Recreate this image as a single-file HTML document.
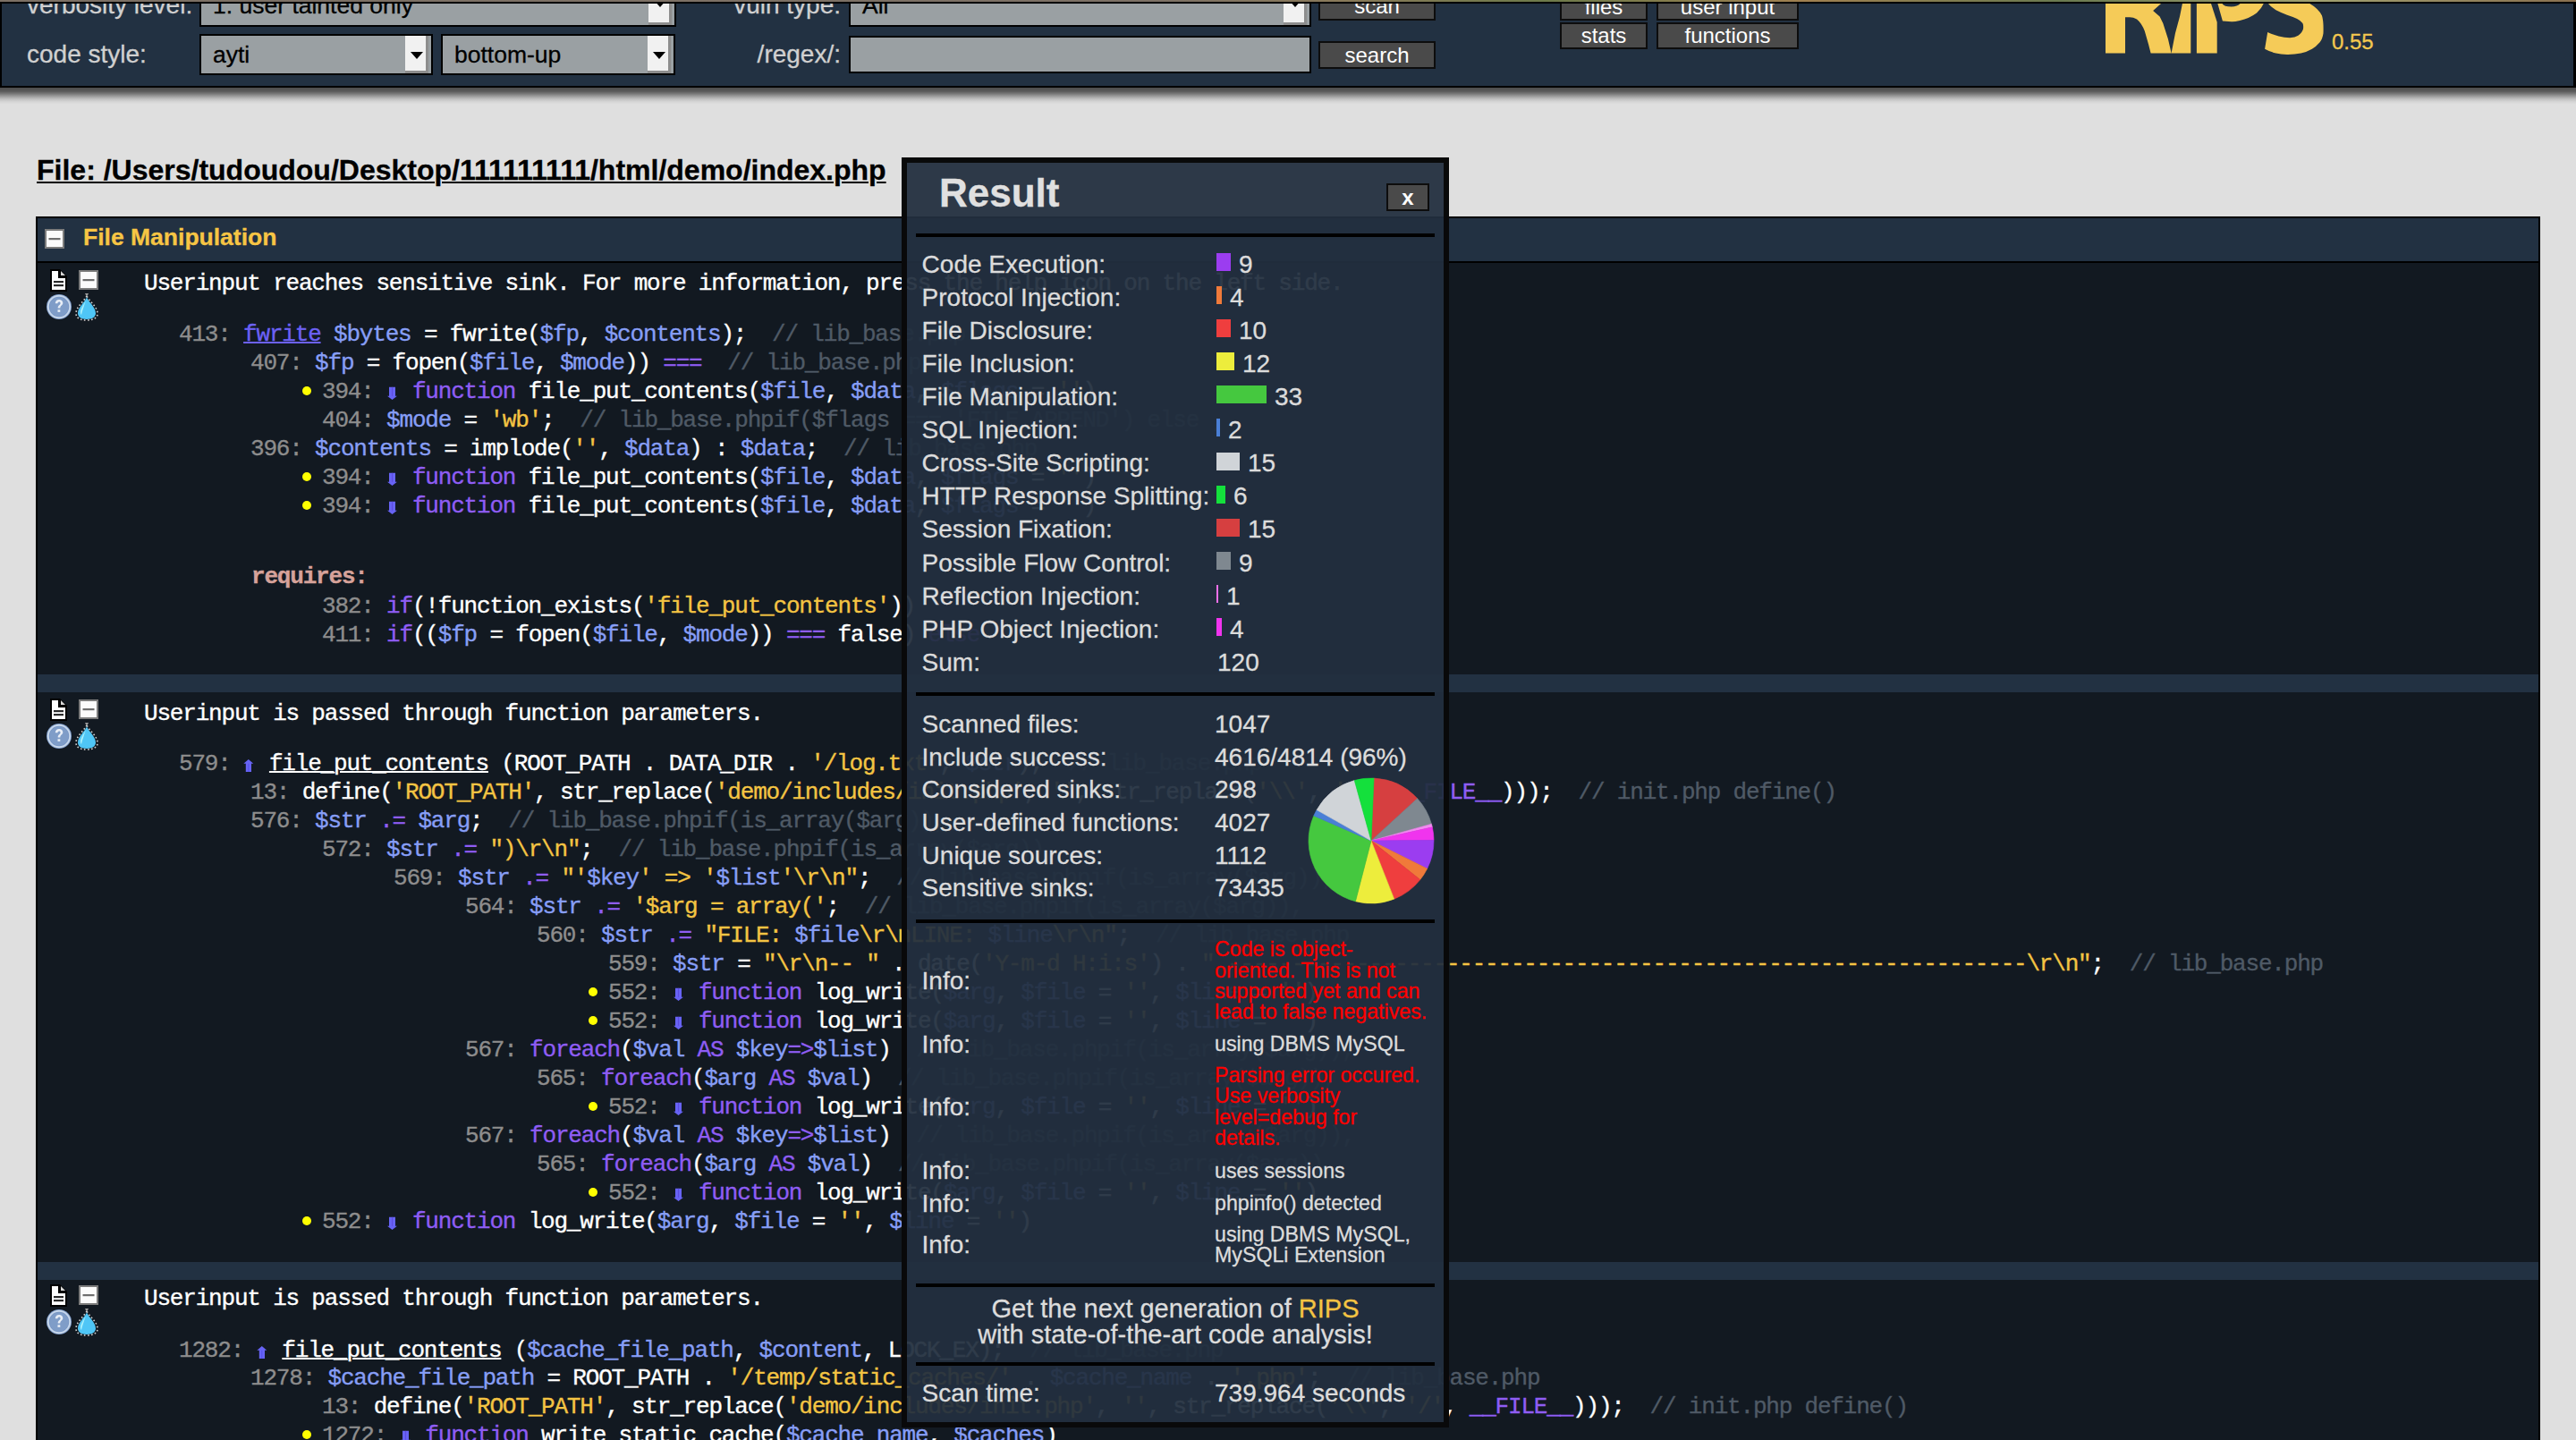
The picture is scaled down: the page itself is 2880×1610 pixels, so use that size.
<!DOCTYPE html>
<html><head><meta charset="utf-8"><title>RIPS</title>
<style>
html,body{margin:0;padding:0;}
body{width:2880px;height:1610px;overflow:hidden;position:relative;background:#dfdfdf;font-family:"Liberation Sans",sans-serif;}
.t{position:absolute;white-space:pre;-webkit-text-stroke:0.3px currentColor;}
.cl{position:absolute;white-space:pre;-webkit-text-stroke:0.35px currentColor;font-family:"Liberation Mono",monospace;font-size:26px;letter-spacing:-1.19px;line-height:32px;color:#fff;}
.cl .n{color:#8d8d8d}
.cl .v{color:#879ef6}
.cl .k{color:#8f5df4}
.cl .s{color:#f4c443}
.cl .c{color:#4f5a66}
.cl .lk{color:#6c61f4;text-decoration:underline;text-underline-offset:1px;text-decoration-thickness:2px}
.cl .u{color:#fff;text-decoration:underline;text-underline-offset:1px;text-decoration-thickness:2px}
.cl .ar{display:inline-block;width:13.22px;margin-right:1.19px;height:20px;vertical-align:-3px;}
.cl .ar svg{display:block}
.bl::before{content:"";position:absolute;left:-22px;top:10px;width:10px;height:10px;border-radius:50%;background:#ffff00;}
.bar{position:absolute;height:20px;}
#strip{position:absolute;left:0;top:0;width:2880px;height:2px;background:linear-gradient(90deg,#7c7065 0%,#7d7166 45%,#8a7a5a 52%,#6d7a4a 60%,#a08050 70%,#6a7a50 80%,#a0a070 90%,#8a7050 100%);}
#hdr{position:absolute;left:0;top:2px;width:2880px;height:96px;box-sizing:border-box;background:#223142;border:2px solid #000;border-right-width:3px;}
#hshadow{position:absolute;left:0;top:98px;width:2880px;height:19px;background:linear-gradient(180deg,rgba(0,0,0,.66) 0px,rgba(0,0,0,.6) 4px,rgba(0,0,0,.45) 7px,rgba(0,0,0,.28) 10px,rgba(0,0,0,.13) 13px,rgba(0,0,0,.04) 16px,rgba(0,0,0,0) 19px);}
#hclip{position:absolute;left:2px;top:4px;width:2875px;height:92px;overflow:hidden;}
#hin{position:absolute;left:-2px;top:-4px;width:2880px;height:100px;}
.sel{position:absolute;box-sizing:border-box;background:#9aa0a3;border:2px solid #000;}
.sel .btn{position:absolute;right:3px;top:0;bottom:0;width:26px;background:#f1f1f1;border-right:3px solid #8d8d8d;border-bottom:3px solid #8d8d8d;box-sizing:border-box;}
.sel .btn::after{content:"";position:absolute;left:6px;top:18px;border-left:7px solid transparent;border-right:7px solid transparent;border-top:8px solid #000;}
.hb{position:absolute;box-sizing:border-box;background:#4a4a4a;border:2px solid #0d0d0d;color:#fff;text-align:center;font-size:24px;}
#ftitle{position:absolute;left:41px;top:172px;font-size:32px;font-weight:bold;color:#000;-webkit-text-stroke:0.3px #000;text-decoration:underline;text-decoration-thickness:2px;text-underline-offset:2px;white-space:pre;}
#box{position:absolute;left:40px;top:242px;width:2800px;height:1400px;background:#121921;border-left:2px solid #000;border-top:2px solid #000;box-sizing:border-box;}
#boxhdr{position:absolute;left:42px;top:244px;width:2796px;height:48px;background:#223142;border-bottom:2px solid #000;}
#boxr{position:absolute;left:2838px;top:242px;width:2px;height:1400px;background:#000;}
.sepband{position:absolute;left:42px;width:2796px;height:20px;background:#223142;}
.ico{position:absolute;}
#dlg{position:absolute;left:1008px;top:176px;width:612px;height:1420px;box-sizing:border-box;border:6px solid rgba(8,8,8,.97);background:rgba(34,47,63,.94);}
.hr{position:absolute;left:1024px;width:580px;height:4px;background:#000;}
</style></head>
<body>
<div id="strip"></div>
<div id="hdr"></div><div id="hshadow"></div>
<div id="hclip"><div id="hin">
<!-- header controls -->
<div class="t" style="left:30px;top:-11px;font-size:28px;line-height:34px;color:#d0d0d0">verbosity level:</div>
<div class="sel" style="left:223px;top:-20px;width:533px;height:50px"><div class="t" style="left:13px;top:8px;font-size:26.5px;line-height:32px;color:#000">1. user tainted only</div><div class="btn"></div></div>
<div class="t" style="left:30px;top:44px;font-size:28px;line-height:34px;color:#d0d0d0">code style:</div>
<div class="sel" style="left:223px;top:38px;width:261px;height:46px"><div class="t" style="left:13px;top:5px;font-size:26.5px;line-height:32px;color:#000">ayti</div><div class="btn"></div></div>
<div class="sel" style="left:493px;top:38px;width:262px;height:46px"><div class="t" style="left:13px;top:5px;font-size:26.5px;line-height:32px;color:#000">bottom-up</div><div class="btn"></div></div>
<div class="t" style="left:820px;top:-11px;font-size:28px;line-height:34px;color:#d0d0d0;width:120px;text-align:right">vuln type:</div>
<div class="sel" style="left:949px;top:-20px;width:517px;height:50px"><div class="t" style="left:13px;top:8px;font-size:26.5px;line-height:32px;color:#000">All</div><div class="btn"></div></div>
<div class="t" style="left:820px;top:44px;font-size:28px;line-height:34px;color:#d0d0d0;width:120px;text-align:right">/regex/:</div>
<div class="sel" style="left:949px;top:40px;width:517px;height:42px"></div>
<div class="hb" style="left:1474px;top:-10px;width:131px;height:33px;line-height:29px">scan</div>
<div class="hb" style="left:1474px;top:46px;width:131px;height:31px;line-height:27px">search</div>
<div class="hb" style="left:1744px;top:-8px;width:98px;height:31px;line-height:27px">files</div>
<div class="hb" style="left:1744px;top:25px;width:98px;height:30px;line-height:26px">stats</div>
<div class="hb" style="left:1852px;top:-8px;width:159px;height:31px;line-height:27px">user input</div>
<div class="hb" style="left:1852px;top:25px;width:159px;height:30px;line-height:26px">functions</div>
<svg class="ico" style="left:2340px;top:0px" width="270" height="64" viewBox="2340 0 270 64"><path fill="#f5cb58" d="M2354 3.7H2416.4L2407.1 12.1L2414.6 18.6L2418.3 26.1L2423.9 43.5L2427.6 59.6H2404.6L2402.1 49.7L2397.8 34.8Q2394.5 26 2389 21.5Q2385 19.3 2381 19.3H2376V59.6H2354Z"/><path fill="#f5cb58" d="M2440 3.7H2449.3V59.6H2427.6L2432 37L2437 18.6Z"/><path fill="#f5cb58" d="M2455.9 3.7H2471.9L2478.7 24.8V59.6H2455.9Z"/><path fill="#f5cb58" d="M2479.3 3.7H2484.3Q2486 7.5 2494.8 7.5Q2502 7.3 2504.8 3.7H2530.9Q2528.5 9.5 2523 14.5Q2515 20.5 2504.2 23Q2498 24.4 2494.8 24.2L2484.9 23.6Z"/><path fill="#f5cb58" d="M2535.8 3.7H2581.8Q2592 9.5 2596 17.5Q2598 24 2597.5 37.3Q2596.5 44 2593.6 47.2Q2589.5 52 2584.9 54.7Q2578 58.5 2572.5 59.6Q2565 61 2557 60.9Q2550 60.7 2544.5 59.6Q2537 57.5 2532.1 54.7L2535.2 36Q2541 38.7 2547.6 40.4Q2554 42 2560.1 42.2Q2566 42 2569.4 39.8Q2574 36.5 2575 32.3Q2575.5 28.5 2574.4 26.1Q2572 23 2568.1 21.1Q2563 18.7 2557 16.8Q2550 14 2544.5 11.2Q2539 8 2535.8 3.7Z"/></svg>
<div class="t" style="left:2607px;top:33px;font-size:24px;line-height:28px;color:#f4c84f;">0.55</div>
</div></div>

<div id="ftitle">File: /Users/tudoudou/Desktop/111111111/html/demo/index.php</div>
<div id="box"></div>
<div id="boxr"></div>
<div id="boxhdr"></div>
<div class="t" style="left:93px;top:249px;font-size:26.5px;line-height:32px;color:#f7c544;font-weight:bold">File Manipulation</div>
<div class="sepband" style="top:754px"></div>
<div class="sepband" style="top:1411px"></div>
<svg class="ico" style="left:50px;top:256px" width="22" height="22" viewBox="0 0 22 22"><rect x="0" y="0" width="22" height="22" fill="#7c7c7c"/><rect x="2" y="2" width="18" height="18" fill="#fbfbfb"/><rect x="4.5" y="10" width="13" height="2.2" fill="#6e6e6e"/></svg>
<svg class="ico" style="left:55px;top:300px" width="22" height="27" viewBox="0 0 22 27"><path d="M1 1H12L20 9V26H1Z" fill="#000"/><path d="M3 3H10V11H18V24H3Z" fill="#fdfdfd"/><path d="M13 3L18 8H13Z" fill="#d8d8d8"/><rect x="5" y="14" width="11" height="2.2" fill="#2a2a2a"/><rect x="5" y="18" width="11" height="2.2" fill="#2a2a2a"/></svg>
<svg class="ico" style="left:88px;top:302px" width="22" height="22" viewBox="0 0 22 22"><rect x="0" y="0" width="22" height="22" fill="#7c7c7c"/><rect x="2" y="2" width="18" height="18" fill="#fbfbfb"/><rect x="4.5" y="10" width="13" height="2.2" fill="#6e6e6e"/></svg>
<svg class="ico" style="left:51px;top:328px" width="30" height="30" viewBox="0 0 30 30"><circle cx="15" cy="15" r="14" fill="#7896c4"/><circle cx="15" cy="15" r="12.2" fill="none" stroke="#c6d6ea" stroke-width="2"/><circle cx="15" cy="15" r="10.5" fill="#7f9dc8"/><path d="M10.8 11.2c0-2.6 1.9-4.2 4.3-4.2s4.2 1.5 4.2 3.8c0 2.6-3 3-3 5.6h-2.6c0-3.4 2.9-3.7 2.9-5.5 0-.9-.6-1.5-1.5-1.5-1 0-1.6.7-1.6 1.8z" fill="#e8eef6"/><rect x="13.5" y="18.3" width="2.8" height="2.6" fill="#e8eef6"/></svg>
<svg class="ico" style="left:83px;top:327px" width="28" height="32" viewBox="0 0 28 32"><path d="M12 1h4l-1.5 3h-1z" fill="#9a9a9a"/><path d="M14 4C11 10 2 16 2 23.5 2 28.5 6.5 31 14 31s12-2.5 12-7.5C26 16 17 10 14 4Z" fill="none" stroke="#d0d0d0" stroke-width="1.6" stroke-dasharray="1.6 2.4"/><path d="M14 5.5C11.5 11 4 16.5 4 23.3 4 27.5 8 30 14 30s10-2.5 10-6.7C24 16.5 16.5 11 14 5.5Z" fill="#4fc6f6"/><path d="M13 9C11 13 7 18 7 22c0 1.5.5 2.5 1 3 1-5 3-10 5-16Z" fill="#a8f0fc"/></svg>
<svg class="ico" style="left:55px;top:780px" width="22" height="27" viewBox="0 0 22 27"><path d="M1 1H12L20 9V26H1Z" fill="#000"/><path d="M3 3H10V11H18V24H3Z" fill="#fdfdfd"/><path d="M13 3L18 8H13Z" fill="#d8d8d8"/><rect x="5" y="14" width="11" height="2.2" fill="#2a2a2a"/><rect x="5" y="18" width="11" height="2.2" fill="#2a2a2a"/></svg>
<svg class="ico" style="left:88px;top:782px" width="22" height="22" viewBox="0 0 22 22"><rect x="0" y="0" width="22" height="22" fill="#7c7c7c"/><rect x="2" y="2" width="18" height="18" fill="#fbfbfb"/><rect x="4.5" y="10" width="13" height="2.2" fill="#6e6e6e"/></svg>
<svg class="ico" style="left:51px;top:808px" width="30" height="30" viewBox="0 0 30 30"><circle cx="15" cy="15" r="14" fill="#7896c4"/><circle cx="15" cy="15" r="12.2" fill="none" stroke="#c6d6ea" stroke-width="2"/><circle cx="15" cy="15" r="10.5" fill="#7f9dc8"/><path d="M10.8 11.2c0-2.6 1.9-4.2 4.3-4.2s4.2 1.5 4.2 3.8c0 2.6-3 3-3 5.6h-2.6c0-3.4 2.9-3.7 2.9-5.5 0-.9-.6-1.5-1.5-1.5-1 0-1.6.7-1.6 1.8z" fill="#e8eef6"/><rect x="13.5" y="18.3" width="2.8" height="2.6" fill="#e8eef6"/></svg>
<svg class="ico" style="left:83px;top:807px" width="28" height="32" viewBox="0 0 28 32"><path d="M12 1h4l-1.5 3h-1z" fill="#9a9a9a"/><path d="M14 4C11 10 2 16 2 23.5 2 28.5 6.5 31 14 31s12-2.5 12-7.5C26 16 17 10 14 4Z" fill="none" stroke="#d0d0d0" stroke-width="1.6" stroke-dasharray="1.6 2.4"/><path d="M14 5.5C11.5 11 4 16.5 4 23.3 4 27.5 8 30 14 30s10-2.5 10-6.7C24 16.5 16.5 11 14 5.5Z" fill="#4fc6f6"/><path d="M13 9C11 13 7 18 7 22c0 1.5.5 2.5 1 3 1-5 3-10 5-16Z" fill="#a8f0fc"/></svg>
<svg class="ico" style="left:55px;top:1435px" width="22" height="27" viewBox="0 0 22 27"><path d="M1 1H12L20 9V26H1Z" fill="#000"/><path d="M3 3H10V11H18V24H3Z" fill="#fdfdfd"/><path d="M13 3L18 8H13Z" fill="#d8d8d8"/><rect x="5" y="14" width="11" height="2.2" fill="#2a2a2a"/><rect x="5" y="18" width="11" height="2.2" fill="#2a2a2a"/></svg>
<svg class="ico" style="left:88px;top:1437px" width="22" height="22" viewBox="0 0 22 22"><rect x="0" y="0" width="22" height="22" fill="#7c7c7c"/><rect x="2" y="2" width="18" height="18" fill="#fbfbfb"/><rect x="4.5" y="10" width="13" height="2.2" fill="#6e6e6e"/></svg>
<svg class="ico" style="left:51px;top:1463px" width="30" height="30" viewBox="0 0 30 30"><circle cx="15" cy="15" r="14" fill="#7896c4"/><circle cx="15" cy="15" r="12.2" fill="none" stroke="#c6d6ea" stroke-width="2"/><circle cx="15" cy="15" r="10.5" fill="#7f9dc8"/><path d="M10.8 11.2c0-2.6 1.9-4.2 4.3-4.2s4.2 1.5 4.2 3.8c0 2.6-3 3-3 5.6h-2.6c0-3.4 2.9-3.7 2.9-5.5 0-.9-.6-1.5-1.5-1.5-1 0-1.6.7-1.6 1.8z" fill="#e8eef6"/><rect x="13.5" y="18.3" width="2.8" height="2.6" fill="#e8eef6"/></svg>
<svg class="ico" style="left:83px;top:1462px" width="28" height="32" viewBox="0 0 28 32"><path d="M12 1h4l-1.5 3h-1z" fill="#9a9a9a"/><path d="M14 4C11 10 2 16 2 23.5 2 28.5 6.5 31 14 31s12-2.5 12-7.5C26 16 17 10 14 4Z" fill="none" stroke="#d0d0d0" stroke-width="1.6" stroke-dasharray="1.6 2.4"/><path d="M14 5.5C11.5 11 4 16.5 4 23.3 4 27.5 8 30 14 30s10-2.5 10-6.7C24 16.5 16.5 11 14 5.5Z" fill="#4fc6f6"/><path d="M13 9C11 13 7 18 7 22c0 1.5.5 2.5 1 3 1-5 3-10 5-16Z" fill="#a8f0fc"/></svg>
<div class="cl" style="left:200px;top:357.78px"><span class="n">413:</span> <span class="lk">fwrite</span> <span class="v">$bytes</span> = fwrite(<span class="v">$fp</span>, <span class="v">$contents</span>);  <span class="c">// lib_base.php</span></div>
<div class="cl" style="left:280px;top:389.58px"><span class="n">407:</span> <span class="v">$fp</span> = fopen(<span class="v">$file</span>, <span class="v">$mode</span>)) <span class="k">===</span>  <span class="c">// lib_base.php</span></div>
<div class="cl bl" style="left:360px;top:421.78px"><span class="n">394:</span> <span class="ar"><svg width="14" height="20" viewBox="0 0 14 20"><path d="M3 4.8H10V14.7H12L6.5 19L1 14.7H3Z" fill="#6763f4"/><rect x="6.2" y="4.8" width="0.7" height="10" fill="#5a40d8"/></svg></span> <span class="k">function</span> file_put_contents(<span class="v">$file</span>, <span class="v">$data</span>, <span class="v">$flags</span> = <span class="s">&#x27;&#x27;</span>)</div>
<div class="cl" style="left:360px;top:453.68px"><span class="n">404:</span> <span class="v">$mode</span> = <span class="s">&#x27;wb&#x27;</span>;  <span class="c">// lib_base.phpif($flags === &#x27;FILE_APPEND&#x27;) else ,</span></div>
<div class="cl" style="left:280px;top:485.58px"><span class="n">396:</span> <span class="v">$contents</span> = implode(<span class="s">&#x27;&#x27;</span>, <span class="v">$data</span>) : <span class="v">$data</span>;  <span class="c">// lib_base.php</span></div>
<div class="cl bl" style="left:360px;top:517.58px"><span class="n">394:</span> <span class="ar"><svg width="14" height="20" viewBox="0 0 14 20"><path d="M3 4.8H10V14.7H12L6.5 19L1 14.7H3Z" fill="#6763f4"/><rect x="6.2" y="4.8" width="0.7" height="10" fill="#5a40d8"/></svg></span> <span class="k">function</span> file_put_contents(<span class="v">$file</span>, <span class="v">$data</span>, <span class="v">$flags</span> = <span class="s">&#x27;&#x27;</span>)</div>
<div class="cl bl" style="left:360px;top:549.58px"><span class="n">394:</span> <span class="ar"><svg width="14" height="20" viewBox="0 0 14 20"><path d="M3 4.8H10V14.7H12L6.5 19L1 14.7H3Z" fill="#6763f4"/><rect x="6.2" y="4.8" width="0.7" height="10" fill="#5a40d8"/></svg></span> <span class="k">function</span> file_put_contents(<span class="v">$file</span>, <span class="v">$data</span>, <span class="v">$flags</span> = <span class="s">&#x27;&#x27;</span>)</div>
<div class="cl" style="left:360px;top:661.68px"><span class="n">382:</span> <span class="k">if</span>(!function_exists(<span class="s">&#x27;file_put_contents&#x27;</span>))</div>
<div class="cl" style="left:360px;top:693.58px"><span class="n">411:</span> <span class="k">if</span>((<span class="v">$fp</span> = fopen(<span class="v">$file</span>, <span class="v">$mode</span>)) <span class="k">===</span> false) <span class="k">else</span></div>
<div class="cl" style="left:200px;top:837.88px"><span class="n">579:</span> <span class="ar"><svg width="14" height="20" viewBox="0 0 14 20"><path d="M2.8 19V9.8H0.3L5.8 5L11.3 9.8H9V19Z" fill="#6763f4"/><rect x="5.5" y="9.8" width="0.7" height="9" fill="#4a48e8"/></svg></span> <span class="u">file_put_contents</span> (ROOT_PATH . DATA_DIR . <span class="s">&#x27;/log.txt&#x27;</span>, <span class="v">$str</span>);  <span class="c">// lib_base.php</span></div>
<div class="cl" style="left:280px;top:869.88px"><span class="n">13:</span> define(<span class="s">&#x27;ROOT_PATH&#x27;</span>, str_replace(<span class="s">&#x27;demo/includes/init.php&#x27;</span>, <span class="s">&#x27;&#x27;</span>, str_replace(<span class="s">&#x27;\\&#x27;</span>, <span class="s">&#x27;/&#x27;</span>, <span class="k">__FILE__</span>)));  <span class="c">// init.php define()</span></div>
<div class="cl" style="left:280px;top:901.88px"><span class="n">576:</span> <span class="v">$str</span> <span class="k">.=</span> <span class="v">$arg</span>;  <span class="c">// lib_base.phpif(is_array($arg)),</span></div>
<div class="cl" style="left:360px;top:933.88px"><span class="n">572:</span> <span class="v">$str</span> <span class="k">.=</span> <span class="s">&quot;)\r\n&quot;</span>;  <span class="c">// lib_base.phpif(is_array($arg)),</span></div>
<div class="cl" style="left:440px;top:965.88px"><span class="n">569:</span> <span class="v">$str</span> <span class="k">.=</span> <span class="s">&quot;&#x27;</span><span class="v">$key</span><span class="s">&#x27; =&gt; &#x27;</span><span class="v">$list</span><span class="s">&#x27;\r\n&quot;</span>;  <span class="c">// lib_base.phpif(is_array($arg)),</span></div>
<div class="cl" style="left:520px;top:997.88px"><span class="n">564:</span> <span class="v">$str</span> <span class="k">.=</span> <span class="s">&#x27;$arg = array(&#x27;</span>;  <span class="c">// lib_base.phpif(is_array($arg)),</span></div>
<div class="cl" style="left:600px;top:1029.88px"><span class="n">560:</span> <span class="v">$str</span> <span class="k">.=</span> <span class="s">&quot;FILE: </span><span class="v">$file</span><span class="s">\r\nLINE: </span><span class="v">$line</span><span class="s">\r\n&quot;</span>;  <span class="c">// lib_base.php</span></div>
<div class="cl" style="left:680px;top:1061.88px"><span class="n">559:</span> <span class="v">$str</span> = <span class="s">&quot;\r\n-- &quot;</span> . date(<span class="s">&#x27;Y-m-d H:i:s&#x27;</span>) . <span class="s">&quot; --------------------------------------------------------------\r\n&quot;</span>;  <span class="c">// lib_base.php</span></div>
<div class="cl bl" style="left:680px;top:1093.88px"><span class="n">552:</span> <span class="ar"><svg width="14" height="20" viewBox="0 0 14 20"><path d="M3 4.8H10V14.7H12L6.5 19L1 14.7H3Z" fill="#6763f4"/><rect x="6.2" y="4.8" width="0.7" height="10" fill="#5a40d8"/></svg></span> <span class="k">function</span> log_write(<span class="v">$arg</span>, <span class="v">$file</span> = <span class="s">&#x27;&#x27;</span>, <span class="v">$line</span> = <span class="s">&#x27;&#x27;</span>)</div>
<div class="cl bl" style="left:680px;top:1125.88px"><span class="n">552:</span> <span class="ar"><svg width="14" height="20" viewBox="0 0 14 20"><path d="M3 4.8H10V14.7H12L6.5 19L1 14.7H3Z" fill="#6763f4"/><rect x="6.2" y="4.8" width="0.7" height="10" fill="#5a40d8"/></svg></span> <span class="k">function</span> log_write(<span class="v">$arg</span>, <span class="v">$file</span> = <span class="s">&#x27;&#x27;</span>, <span class="v">$line</span> = <span class="s">&#x27;&#x27;</span>)</div>
<div class="cl" style="left:520px;top:1157.88px"><span class="n">567:</span> <span class="k">foreach</span>(<span class="v">$val</span> <span class="k">AS</span> <span class="v">$key</span><span class="k">=&gt;</span><span class="v">$list</span>)  <span class="c">// lib_base.phpif(is_array($arg)),</span></div>
<div class="cl" style="left:600px;top:1189.88px"><span class="n">565:</span> <span class="k">foreach</span>(<span class="v">$arg</span> <span class="k">AS</span> <span class="v">$val</span>)  <span class="c">// lib_base.phpif(is_array($arg)),</span></div>
<div class="cl bl" style="left:680px;top:1221.88px"><span class="n">552:</span> <span class="ar"><svg width="14" height="20" viewBox="0 0 14 20"><path d="M3 4.8H10V14.7H12L6.5 19L1 14.7H3Z" fill="#6763f4"/><rect x="6.2" y="4.8" width="0.7" height="10" fill="#5a40d8"/></svg></span> <span class="k">function</span> log_write(<span class="v">$arg</span>, <span class="v">$file</span> = <span class="s">&#x27;&#x27;</span>, <span class="v">$line</span> = <span class="s">&#x27;&#x27;</span>)</div>
<div class="cl" style="left:520px;top:1253.88px"><span class="n">567:</span> <span class="k">foreach</span>(<span class="v">$val</span> <span class="k">AS</span> <span class="v">$key</span><span class="k">=&gt;</span><span class="v">$list</span>)  <span class="c">// lib_base.phpif(is_array($arg)),</span></div>
<div class="cl" style="left:600px;top:1285.88px"><span class="n">565:</span> <span class="k">foreach</span>(<span class="v">$arg</span> <span class="k">AS</span> <span class="v">$val</span>)  <span class="c">// lib_base.phpif(is_array($arg)),</span></div>
<div class="cl bl" style="left:680px;top:1317.88px"><span class="n">552:</span> <span class="ar"><svg width="14" height="20" viewBox="0 0 14 20"><path d="M3 4.8H10V14.7H12L6.5 19L1 14.7H3Z" fill="#6763f4"/><rect x="6.2" y="4.8" width="0.7" height="10" fill="#5a40d8"/></svg></span> <span class="k">function</span> log_write(<span class="v">$arg</span>, <span class="v">$file</span> = <span class="s">&#x27;&#x27;</span>, <span class="v">$line</span> = <span class="s">&#x27;&#x27;</span>)</div>
<div class="cl bl" style="left:360px;top:1349.88px"><span class="n">552:</span> <span class="ar"><svg width="14" height="20" viewBox="0 0 14 20"><path d="M3 4.8H10V14.7H12L6.5 19L1 14.7H3Z" fill="#6763f4"/><rect x="6.2" y="4.8" width="0.7" height="10" fill="#5a40d8"/></svg></span> <span class="k">function</span> log_write(<span class="v">$arg</span>, <span class="v">$file</span> = <span class="s">&#x27;&#x27;</span>, <span class="v">$line</span> = <span class="s">&#x27;&#x27;</span>)</div>
<div class="cl" style="left:200px;top:1493.78px"><span class="n">1282:</span> <span class="ar"><svg width="14" height="20" viewBox="0 0 14 20"><path d="M2.8 19V9.8H0.3L5.8 5L11.3 9.8H9V19Z" fill="#6763f4"/><rect x="5.5" y="9.8" width="0.7" height="9" fill="#4a48e8"/></svg></span> <span class="u">file_put_contents</span> (<span class="v">$cache_file_path</span>, <span class="v">$content</span>, LOCK_EX);  <span class="c">// lib_base.php</span></div>
<div class="cl" style="left:280px;top:1524.88px"><span class="n">1278:</span> <span class="v">$cache_file_path</span> = ROOT_PATH . <span class="s">&#x27;/temp/static_caches/&#x27;</span> . <span class="v">$cache_name</span> . <span class="s">&#x27;.php&#x27;</span>;  <span class="c">// lib_base.php</span></div>
<div class="cl" style="left:360px;top:1556.68px"><span class="n">13:</span> define(<span class="s">&#x27;ROOT_PATH&#x27;</span>, str_replace(<span class="s">&#x27;demo/includes/init.php&#x27;</span>, <span class="s">&#x27;&#x27;</span>, str_replace(<span class="s">&#x27;\\&#x27;</span>, <span class="s">&#x27;/&#x27;</span>, <span class="k">__FILE__</span>)));  <span class="c">// init.php define()</span></div>
<div class="cl bl" style="left:360px;top:1588.58px"><span class="n">1272:</span> <span class="ar"><svg width="14" height="20" viewBox="0 0 14 20"><path d="M3 4.8H10V14.7H12L6.5 19L1 14.7H3Z" fill="#6763f4"/><rect x="6.2" y="4.8" width="0.7" height="10" fill="#5a40d8"/></svg></span> <span class="k">function</span> write_static_cache(<span class="v">$cache_name</span>, <span class="v">$caches</span>)</div>
<div class="cl" style="left:161px;top:301.08px;color:#fff">Userinput reaches sensitive sink. For more information, press the help icon on the left side.</div>
<div class="cl" style="left:161px;top:782.08px;color:#fff">Userinput is passed through function parameters.</div>
<div class="cl" style="left:161px;top:1435.58px;color:#fff">Userinput is passed through function parameters.</div>
<div class="cl" style="left:281px;top:628.68px;color:#d6a29a;font-weight:bold">requires:</div>
<div id="dlg"></div>
<div class="t" style="left:1050px;top:190px;font-size:44px;line-height:52px;color:#e0e0e0;font-weight:bold">Result</div>
<div class="hb" style="left:1550px;top:205px;width:48px;height:31px;line-height:27px;font-weight:bold;font-size:24px">x</div>
<div class="hr" style="top:261px"></div>
<div class="hr" style="top:774px"></div>
<div class="hr" style="top:1028px"></div>
<div class="hr" style="top:1435px"></div>
<div class="hr" style="top:1523px"></div>
<div class="t" style="left:1030.6px;top:277.80px;font-size:28px;line-height:35px;color:#dcdcdc;">Code Execution:</div>
<div class="bar" style="left:1360px;top:283.0px;width:16px;background:#9b3df0"></div>
<div class="t" style="left:1385.0px;top:277.80px;font-size:28px;line-height:35px;color:#dcdcdc;">9</div>
<div class="t" style="left:1030.6px;top:314.88px;font-size:28px;line-height:35px;color:#dcdcdc;">Protocol Injection:</div>
<div class="bar" style="left:1360px;top:320.1px;width:6px;background:#f07a3a"></div>
<div class="t" style="left:1375.0px;top:314.88px;font-size:28px;line-height:35px;color:#dcdcdc;">4</div>
<div class="t" style="left:1030.6px;top:351.96px;font-size:28px;line-height:35px;color:#dcdcdc;">File Disclosure:</div>
<div class="bar" style="left:1360px;top:357.2px;width:16px;background:#ef3e3e"></div>
<div class="t" style="left:1385.0px;top:351.96px;font-size:28px;line-height:35px;color:#dcdcdc;">10</div>
<div class="t" style="left:1030.6px;top:389.04px;font-size:28px;line-height:35px;color:#dcdcdc;">File Inclusion:</div>
<div class="bar" style="left:1360px;top:394.2px;width:20px;background:#eded3c"></div>
<div class="t" style="left:1389.0px;top:389.04px;font-size:28px;line-height:35px;color:#dcdcdc;">12</div>
<div class="t" style="left:1030.6px;top:426.12px;font-size:28px;line-height:35px;color:#dcdcdc;">File Manipulation:</div>
<div class="bar" style="left:1360px;top:431.3px;width:56px;background:#45c83f"></div>
<div class="t" style="left:1425.0px;top:426.12px;font-size:28px;line-height:35px;color:#dcdcdc;">33</div>
<div class="t" style="left:1030.6px;top:463.20px;font-size:28px;line-height:35px;color:#dcdcdc;">SQL Injection:</div>
<div class="bar" style="left:1360px;top:468.4px;width:4px;background:#4a7fd6"></div>
<div class="t" style="left:1373.0px;top:463.20px;font-size:28px;line-height:35px;color:#dcdcdc;">2</div>
<div class="t" style="left:1030.6px;top:500.28px;font-size:28px;line-height:35px;color:#dcdcdc;">Cross-Site Scripting:</div>
<div class="bar" style="left:1360px;top:505.5px;width:26px;background:#d0d4d8"></div>
<div class="t" style="left:1395.0px;top:500.28px;font-size:28px;line-height:35px;color:#dcdcdc;">15</div>
<div class="t" style="left:1030.6px;top:537.36px;font-size:28px;line-height:35px;color:#dcdcdc;">HTTP Response Splitting:</div>
<div class="bar" style="left:1360px;top:542.6px;width:10px;background:#14e03c"></div>
<div class="t" style="left:1379.0px;top:537.36px;font-size:28px;line-height:35px;color:#dcdcdc;">6</div>
<div class="t" style="left:1030.6px;top:574.44px;font-size:28px;line-height:35px;color:#dcdcdc;">Session Fixation:</div>
<div class="bar" style="left:1360px;top:579.6px;width:26px;background:#d63f40"></div>
<div class="t" style="left:1395.0px;top:574.44px;font-size:28px;line-height:35px;color:#dcdcdc;">15</div>
<div class="t" style="left:1030.6px;top:611.52px;font-size:28px;line-height:35px;color:#dcdcdc;">Possible Flow Control:</div>
<div class="bar" style="left:1360px;top:616.7px;width:16px;background:#7f8890"></div>
<div class="t" style="left:1385.0px;top:611.52px;font-size:28px;line-height:35px;color:#dcdcdc;">9</div>
<div class="t" style="left:1030.6px;top:648.60px;font-size:28px;line-height:35px;color:#dcdcdc;">Reflection Injection:</div>
<div class="bar" style="left:1360px;top:653.8px;width:2px;background:#f070e8"></div>
<div class="t" style="left:1371.0px;top:648.60px;font-size:28px;line-height:35px;color:#dcdcdc;">1</div>
<div class="t" style="left:1030.6px;top:685.68px;font-size:28px;line-height:35px;color:#dcdcdc;">PHP Object Injection:</div>
<div class="bar" style="left:1360px;top:690.9px;width:6px;background:#f034ee"></div>
<div class="t" style="left:1375.0px;top:685.68px;font-size:28px;line-height:35px;color:#dcdcdc;">4</div>
<div class="t" style="left:1030.6px;top:722.76px;font-size:28px;line-height:35px;color:#dcdcdc;">Sum:</div>
<div class="t" style="left:1361.0px;top:722.76px;font-size:28px;line-height:35px;color:#dcdcdc;">120</div>
<div class="t" style="left:1030.6px;top:791.80px;font-size:28px;line-height:35px;color:#dcdcdc;">Scanned files:</div>
<div class="t" style="left:1358.0px;top:791.80px;font-size:28px;line-height:35px;color:#dcdcdc;">1047</div>
<div class="t" style="left:1030.6px;top:828.50px;font-size:28px;line-height:35px;color:#dcdcdc;">Include success:</div>
<div class="t" style="left:1358.0px;top:828.50px;font-size:28px;line-height:35px;color:#dcdcdc;">4616/4814 (96%)</div>
<div class="t" style="left:1030.6px;top:865.20px;font-size:28px;line-height:35px;color:#dcdcdc;">Considered sinks:</div>
<div class="t" style="left:1358.0px;top:865.20px;font-size:28px;line-height:35px;color:#dcdcdc;">298</div>
<div class="t" style="left:1030.6px;top:901.90px;font-size:28px;line-height:35px;color:#dcdcdc;">User-defined functions:</div>
<div class="t" style="left:1358.0px;top:901.90px;font-size:28px;line-height:35px;color:#dcdcdc;">4027</div>
<div class="t" style="left:1030.6px;top:938.60px;font-size:28px;line-height:35px;color:#dcdcdc;">Unique sources:</div>
<div class="t" style="left:1358.0px;top:938.60px;font-size:28px;line-height:35px;color:#dcdcdc;">1112</div>
<div class="t" style="left:1030.6px;top:975.30px;font-size:28px;line-height:35px;color:#dcdcdc;">Sensitive sinks:</div>
<div class="t" style="left:1358.0px;top:975.30px;font-size:28px;line-height:35px;color:#dcdcdc;">73435</div>
<div class="t" style="left:1030.6px;top:1078.80px;font-size:28px;line-height:35px;color:#dcdcdc;">Info:</div>
<div class="t" style="left:1030.6px;top:1149.80px;font-size:28px;line-height:35px;color:#dcdcdc;">Info:</div>
<div class="t" style="left:1030.6px;top:1220.30px;font-size:28px;line-height:35px;color:#dcdcdc;">Info:</div>
<div class="t" style="left:1030.6px;top:1290.80px;font-size:28px;line-height:35px;color:#dcdcdc;">Info:</div>
<div class="t" style="left:1030.6px;top:1327.80px;font-size:28px;line-height:35px;color:#dcdcdc;">Info:</div>
<div class="t" style="left:1030.6px;top:1374.30px;font-size:28px;line-height:35px;color:#dcdcdc;">Info:</div>
<div class="t" style="left:1358.0px;top:1049.46px;font-size:23.2px;line-height:24px;color:#ff0000;">Code is object-</div>
<div class="t" style="left:1358.0px;top:1072.66px;font-size:23.2px;line-height:24px;color:#ff0000;">oriented. This is not</div>
<div class="t" style="left:1358.0px;top:1095.86px;font-size:23.2px;line-height:24px;color:#ff0000;">supported yet and can</div>
<div class="t" style="left:1358.0px;top:1119.06px;font-size:23.2px;line-height:24px;color:#ff0000;">lead to false negatives.</div>
<div class="t" style="left:1358.0px;top:1155.46px;font-size:23.2px;line-height:24px;color:#dcdcdc;">using DBMS MySQL</div>
<div class="t" style="left:1358.0px;top:1189.96px;font-size:23.2px;line-height:24px;color:#ff0000;">Parsing error occured.</div>
<div class="t" style="left:1358.0px;top:1213.46px;font-size:23.2px;line-height:24px;color:#ff0000;">Use verbosity</div>
<div class="t" style="left:1358.0px;top:1236.96px;font-size:23.2px;line-height:24px;color:#ff0000;">level=debug for</div>
<div class="t" style="left:1358.0px;top:1260.46px;font-size:23.2px;line-height:24px;color:#ff0000;">details.</div>
<div class="t" style="left:1358.0px;top:1296.96px;font-size:23.2px;line-height:24px;color:#dcdcdc;">uses sessions</div>
<div class="t" style="left:1358.0px;top:1333.46px;font-size:23.2px;line-height:24px;color:#dcdcdc;">phpinfo() detected</div>
<div class="t" style="left:1358.0px;top:1367.96px;font-size:23.2px;line-height:24px;color:#dcdcdc;">using DBMS MySQL,</div>
<div class="t" style="left:1358.0px;top:1390.96px;font-size:23.2px;line-height:24px;color:#dcdcdc;">MySQLi Extension</div>
<div class="t" style="left:1014.0px;top:1444.95px;font-size:29px;line-height:36px;color:#dcdcdc;width:600px;text-align:center;">Get the next generation of <span style="color:#f4c443">RIPS</span></div>
<div class="t" style="left:1014.0px;top:1474.45px;font-size:29px;line-height:36px;color:#dcdcdc;width:600px;text-align:center;">with state-of-the-art code analysis!</div>
<div class="t" style="left:1030.6px;top:1539.80px;font-size:28px;line-height:35px;color:#dcdcdc;">Scan time:</div>
<div class="t" style="left:1358.0px;top:1539.80px;font-size:28px;line-height:35px;color:#dcdcdc;">739.964 seconds</div>
<svg class="ico" style="left:1462px;top:869px" width="142" height="142" viewBox="1462.000000 869.000000 142.000000 142.000000"><path d="M1533.00 940.00L1536.05 870.07A70 70 0 0 1 1584.61 892.71Z" fill="#d63f40" stroke="#d63f40" stroke-width="0.6"/><path d="M1533.00 940.00L1584.61 892.71A70 70 0 0 1 1600.45 921.29Z" fill="#7f8890" stroke="#7f8890" stroke-width="0.6"/><path d="M1533.00 940.00L1600.45 921.29A70 70 0 0 1 1601.34 924.85Z" fill="#f28af0" stroke="#f28af0" stroke-width="0.6"/><path d="M1533.00 940.00L1601.34 924.85A70 70 0 0 1 1603.00 939.39Z" fill="#f034ee" stroke="#f034ee" stroke-width="0.6"/><path d="M1533.00 940.00L1603.00 939.39A70 70 0 0 1 1595.65 971.23Z" fill="#9b3df0" stroke="#9b3df0" stroke-width="0.6"/><path d="M1533.00 940.00L1595.65 971.23A70 70 0 0 1 1587.78 983.58Z" fill="#f07a3a" stroke="#f07a3a" stroke-width="0.6"/><path d="M1533.00 940.00L1587.78 983.58A70 70 0 0 1 1558.66 1005.13Z" fill="#ef3e3e" stroke="#ef3e3e" stroke-width="0.6"/><path d="M1533.00 940.00L1558.66 1005.13A70 70 0 0 1 1515.47 1007.77Z" fill="#eded3c" stroke="#eded3c" stroke-width="0.6"/><path d="M1533.00 940.00L1515.47 1007.77A70 70 0 0 1 1468.81 912.09Z" fill="#45c83f" stroke="#45c83f" stroke-width="0.6"/><path d="M1533.00 940.00L1468.81 912.09A70 70 0 0 1 1472.08 905.53Z" fill="#4a7fd6" stroke="#4a7fd6" stroke-width="0.6"/><path d="M1533.00 940.00L1472.08 905.53A70 70 0 0 1 1514.29 872.55Z" fill="#d0d4d8" stroke="#d0d4d8" stroke-width="0.6"/><path d="M1533.00 940.00L1514.29 872.55A70 70 0 0 1 1536.05 870.07Z" fill="#14e03c" stroke="#14e03c" stroke-width="0.6"/></svg>
</body></html>
